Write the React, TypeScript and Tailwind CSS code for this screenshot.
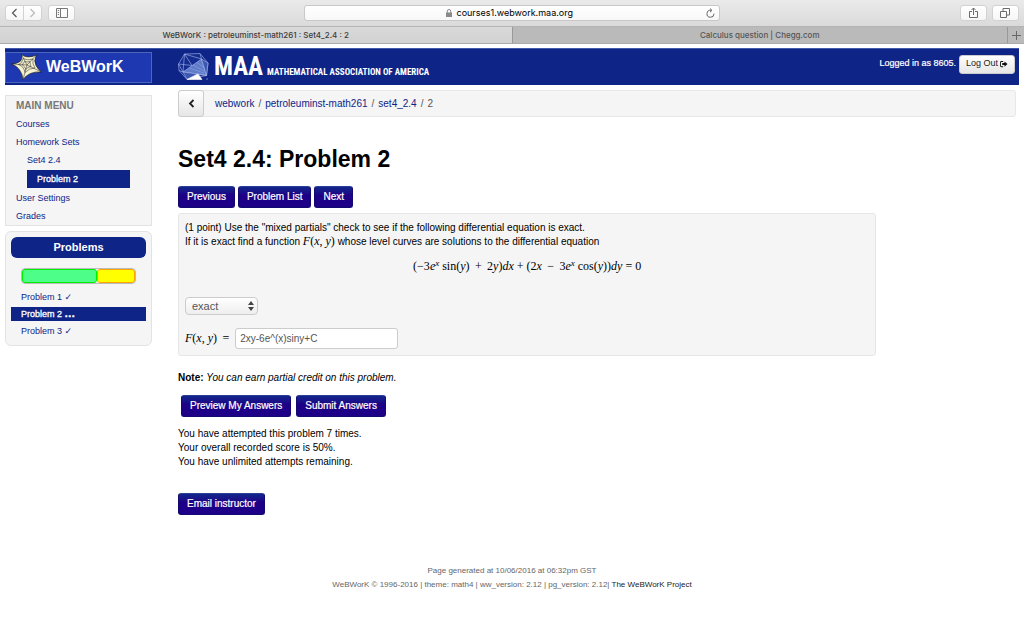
import type { ReactNode } from "react"
import { useState } from "react"

const primaryButton =
  "h-[22px] rounded-[3px] border border-[#120a70] border-t-[#2b3f96] bg-gradient-to-b from-[#10258a] to-[#1d0087] to-40% px-2 text-[10px] leading-5 text-white [-webkit-text-stroke:0.2px_white]"

const toolbarButton =
  "flex h-4 items-center justify-center rounded-[3px] border border-[#d2d2d2] bg-gradient-to-b from-white to-[#f6f6f6] text-[#6b6b6b]"

const menuItems = [
  { label: "Courses", style: "px-[10px]" },
  { label: "Homework Sets", style: "px-[10px]" },
  { label: "Set4 2.4", style: "px-[21px]" },
  {
    label: "Problem 2",
    style: "my-px mx-[21px] bg-[#0f2487] pl-[10px] text-white [-webkit-text-stroke:0.3px_white]",
  },
  { label: "User Settings", style: "px-[10px]" },
  { label: "Grades", style: "px-[10px]" },
]

const problems = [
  { label: "Problem 1", mark: "✓", active: false },
  { label: "Problem 2", mark: "...", active: true },
  { label: "Problem 3", mark: "✓", active: false },
]

function M({ children }: { children: ReactNode }) {
  return <span className="font-['Liberation_Serif',serif] text-[12px] leading-none">{children}</span>
}

function BrowserChrome() {
  return (
    <div>
      <div className="flex h-[27px] items-center justify-between border-b border-[#b4b4b4] bg-gradient-to-b from-[#eaeaea] to-[#dadada] px-[5px]">
        <div className="flex w-72 items-center">
          <button className={`${toolbarButton} w-[19px] rounded-r-none`} aria-label="Back">
            <svg width="7" height="10" viewBox="0 0 7 10" fill="none" stroke="#555" strokeWidth="1.2">
              <path d="M5.5 1L1.5 5l4 4" />
            </svg>
          </button>
          <button className={`${toolbarButton} -ml-px w-[19px] rounded-l-none`} aria-label="Forward">
            <svg width="7" height="10" viewBox="0 0 7 10" fill="none" stroke="#b9b9b9" strokeWidth="1.2">
              <path d="M1.5 1l4 4-4 4" />
            </svg>
          </button>
          <button className={`${toolbarButton} ml-1.5 w-[27px]`} aria-label="Sidebar">
            <svg width="12" height="10" viewBox="0 0 12 10" fill="none" stroke="#777" strokeWidth="1">
              <path d="M.5.5h11v9H.5zM4.500.5v9M1.800 2.500h1.300M1.800 4.500h1.300M1.800 6.500h1.300" />
            </svg>
          </button>
        </div>
        <div className="flex h-4 w-[41%] items-center rounded-[3px] border border-[#c8c8c8] bg-gradient-to-b from-white to-[#f8f8f8]">
          <div className="flex flex-1 items-center justify-center gap-1 pl-3">
            <svg width="6" height="8" viewBox="0 0 6 8" fill="#8a8a8a">
              <path d="M0 3.500h6V8H0z" />
              <path d="M1.300 4V2.200a1.700 1.700 0 013.400 0V4" fill="none" stroke="#8a8a8a" />
            </svg>
            <input
              aria-label="Address"
              defaultValue="courses1.webwork.maa.org"
              className="w-[120px] bg-transparent font-[Inter,sans-serif] text-[9px] text-black outline-none"
            />
          </div>
          <button className="mr-1 text-[#666]" aria-label="Reload">
            <svg width="9" height="10" viewBox="0 0 9 10" fill="none" stroke="currentColor" strokeWidth="1">
              <path d="M5 2.300A3.500 3.500 0 108 5.700M4 .500l2 1.900-2 1.800" />
            </svg>
          </button>
        </div>
        <div className="flex w-72 justify-end gap-[5px]">
          <button className={`${toolbarButton} w-[27px]`} aria-label="Share">
            <svg width="9" height="12" viewBox="0 0 9 12" fill="none" stroke="currentColor" strokeWidth="1">
              <path d="M3 4.500H.500v6h8v-6H6M4.500 8V1M2.500 3l2-2 2 2" />
            </svg>
          </button>
          <button className={`${toolbarButton} w-[27px]`} aria-label="Show tabs">
            <svg width="10" height="10" viewBox="0 0 10 10" fill="none" stroke="currentColor" strokeWidth="1">
              <path d="M.5 3.500h6v6h-6zM3 3V.500h6.500V7H7" />
            </svg>
          </button>
        </div>
      </div>

      {/* Tabs */}
      <div className="flex h-[17px] border-b border-[#aaa] font-[Inter,sans-serif] text-[8px] font-medium leading-4">
        <button className="flex-1 bg-gradient-to-b from-[#d9d9d9] to-[#d2d2d2] text-[#3d3d3d]">
          WeBWorK : petroleuminst-math261 : Set4_2.4 : 2
        </button>
        <div className="flex flex-1 border-l border-[#999] bg-[#bababa] text-[#555]">
          <button className="flex-1">Calculus question | Chegg.com</button>
          <button className="flex w-[17px] items-center justify-center border-l border-[#999]" aria-label="New tab">
            <svg width="9" height="9" viewBox="0 0 9 9" stroke="#666" strokeWidth="1">
              <path d="M4.500 0v9M0 4.500h9" />
            </svg>
          </button>
        </div>
      </div>
    </div>
  )
}

function WebworkLogo() {
  return (
    <svg width="31" height="26" viewBox="0 0 31 26" fill="#f3efcf" stroke="#20201c" strokeWidth=".7">
      <path d="M10.500.500Q16 5 25.500 1Q22.500 7 25 11.500Q27 15.500 30.500 18Q24 17.500 19.500 19.500Q15 21.500 12 25.500Q11.500 20 8.500 16Q6 12 .500 10Q7 9.500 9.500 7Q11.500 4.500 10.500.500Z" />
      <g fill="none" strokeWidth=".5">
        <path d="M10.500.500L16 11 25.500 1M.500 10L16 11l14.500 7M16 11l-4 14.500" />
        <path d="M12 4.500q5 2.500 10 .500q-1 5 2 9q-6 0-10 4.500q-1-6-6.500-8q4-1 4.500-6z" />
        <path d="M13.500 7.500q3 1 5.500 0q0 3 1 5q-4 .500-5 3q-1-3-4-5q2-1 2.500-3z" />
      </g>
    </svg>
  )
}

function MaaLogo() {
  return (
    <svg width="31" height="28" viewBox="0 0 31 28" fill="none" stroke="#a9bbed" strokeWidth=".6">
      <path d="M6.500 1L22 .500 30 10l-1.500 12.500L9 26.500 1 17.500.500 11z" fill="#152d90" />
      <path d="M23.500 6L5 19l23.500 3.500z" fill="#5f7bc9" />
      <path d="M23.500 6L30 10l-1.500 12.500z" fill="#3c57b0" />
      <path d="M5 19l15 2-11 5.500z" fill="#3c57b0" />
      <path d="M9 26.500L20 21l4 5.500z" fill="#fff" stroke="#fff" />
      <path d="M6.500 1l17 5L22 .500M6.500 1L5 19M.500 11L5 19l-4-1.500M.500 11L14 12.500M6.500 1L14 12.500M20 21l8.500 1.500" />
      <path d="M11 15l15 5M15 12l11 6M19 9.500l8 6" strokeWidth=".4" />
      <circle cx="29" cy="26" r=".7" fill="#8fa4e4" stroke="none" />
    </svg>
  )
}

function Header() {
  return (
    <header className="flex h-[37px] items-center border-t border-[#4059aa] bg-[#0f2487] pr-1">
      <a
        href="#webwork"
        className="flex h-[31px] w-[147px] items-center gap-1 border border-[#4c66bd] bg-[#1e38b2] pl-[5px] text-[16px] font-bold text-white"
      >
        <WebworkLogo />
        WeBWorK
      </a>
      <a href="#maa" className="ml-[26px] flex items-center gap-[5px] text-white">
        <MaaLogo />
        <span className="flex items-baseline gap-1 font-['Roboto_Condensed','Liberation_Sans_Narrow','Liberation_Sans',sans-serif] font-bold">
          <span className="text-[25px] leading-7">MAA</span>
          <span className="text-[9px]">MATHEMATICAL ASSOCIATION OF AMERICA</span>
        </span>
      </a>
      <div className="ml-auto flex items-center gap-[3px] pb-1.5">
        <span className="text-[9px] text-white [-webkit-text-stroke:0.2px_white]">Logged in as 8605.</span>
        <button className="flex h-[19px] items-center gap-0.5 rounded-[3px] border border-[#ccc] bg-gradient-to-b from-white to-[#e6e6e6] px-1.5 text-[9px] text-[#222]">
          Log Out
          <svg width="8" height="7" viewBox="0 0 9 8" fill="#111">
            <path d="M3.500 0H1.500Q0 0 0 1.500v4Q0 7 1.500 7h2V6h-2Q1 6 1 5.500v-4Q1 1 1.500 1h2z" />
            <path d="M2.500 2.300H5V.500l3.500 3L5 6.500V4.700H2.500z" />
          </svg>
        </button>
      </div>
    </header>
  )
}

function Sidebar() {
  return (
    <aside className="w-[147px] shrink-0 pt-[10px] text-[9px]">
      <nav className="border border-[#e3e3e3] bg-[#f5f5f5]">
        <h2 className="px-[10px] pt-px text-[10px] font-bold leading-[18px] text-[#777]">MAIN MENU</h2>
        <ul>
          {menuItems.map((item) => (
            <li key={item.label} className={`leading-[18px] text-[#0f2487] ${item.style}`}>
              <a href="#menu">{item.label}</a>
            </li>
          ))}
        </ul>
      </nav>

      <section className="mt-[5px] rounded-md border border-[#e3e3e3] bg-[#f5f5f5] px-[5px] pb-1 pt-[5px]">
        <h2 className="rounded-md bg-[#0f2487] text-center text-[11px] font-bold leading-[21px] text-white">Problems</h2>
        <div className="mx-[10px] mb-[6px] mt-[10px] flex h-4 rounded border border-[#bbb]">
          <div className="w-2/3 rounded-[3px] border border-[#00f000] bg-[#4dff88]" />
          <div className="w-1/3 rounded-[3px] border border-[#ffa500] bg-[#ffff00]" />
        </div>
        <ul>
          {problems.map((p) => (
            <li
              key={p.label}
              className={`my-[3px] pl-[10px] leading-[14px] ${p.active ? "bg-[#0f2487] text-white [-webkit-text-stroke:0.3px_white]" : "text-[#0f2487]"}`}
            >
              <a href="#problem">
                {p.label} <span className="font-['DejaVu_Sans',sans-serif] font-bold">{p.mark}</span>
              </a>
            </li>
          ))}
        </ul>
      </section>
    </aside>
  )
}

function Breadcrumb() {
  return (
    <nav className="mt-[5px] flex h-[27px] items-center rounded-[3px] border border-[#e8e8e8] bg-[#f5f5f5] text-[10px] text-[#0f2487]">
      <button
        aria-label="Up"
        className="-ml-px flex h-[27px] w-[26px] items-center justify-center rounded-[3px] border border-[#ccc] bg-gradient-to-b from-white to-[#e6e6e6]"
      >
        <svg width="7" height="9" viewBox="0 0 7 9" fill="none" stroke="#222" strokeWidth="1.8">
          <path d="M5.500 1L2 4.500 5.500 8" />
        </svg>
      </button>
      <div className="ml-[11px] flex gap-1">
        <a href="#webwork">webwork</a>
        <span className="text-[#555]">/</span>
        <a href="#course">petroleuminst-math261</a>
        <span className="text-[#555]">/</span>
        <a href="#set">set4_2.4</a>
        <span className="text-[#555]">/</span>
        <span className="text-[#555]">2</span>
      </div>
    </nav>
  )
}

function ProblemBody() {
  const [kind, setKind] = useState("exact")
  const [answer, setAnswer] = useState("2xy-6e^(x)siny+C")

  return (
    <div className="mt-[5px] w-5/6 rounded-[3px] border border-[#e6e6e6] bg-[#f5f5f5] px-1.5 pb-1.5 pt-[7px]">
      <p className="leading-[14px]">
        (1 point) Use the "mixed partials" check to see if the following differential equation is exact.
        <br />
        If it is exact find a function{" "}
        <M>
          <i>F</i>(<i>x</i>, <i>y</i>)
        </M>{" "}
        whose level curves are solutions to the differential equation
      </p>
      <p className="mt-[10px] text-center leading-4">
        <M>
          (−3<i>e</i>
          <sup className="text-[9px]">
            <i>x</i>
          </sup>{" "}
          sin(<i>y</i>)&thinsp; + &thinsp;2<i>y</i>)<i>dx</i> + (2<i>x</i>&thinsp; − &thinsp;3<i>e</i>
          <sup className="text-[9px]">
            <i>x</i>
          </sup>{" "}
          cos(<i>y</i>))<i>dy</i> = 0
        </M>
      </p>
      <div className="relative mt-[22px] w-[73px]">
        <select
          aria-label="Exactness"
          value={kind}
          onChange={(e) => setKind(e.target.value)}
          className="block h-[18px] w-full appearance-none rounded-[4px] border border-[#ccc] bg-gradient-to-b from-white to-[#eee] pl-[6px] text-[11px] leading-4 text-[#555]"
        >
          <option value="exact">exact</option>
          <option value="not exact">not exact</option>
        </select>
        <svg className="pointer-events-none absolute right-1 top-1" width="6" height="10" viewBox="0 0 6 10" fill="#444">
          <path d="M3 0l3 4H0zM3 10L0 6h6z" />
        </svg>
      </div>
      <div className="mt-[13px] flex items-center gap-1.5">
        <label htmlFor="answer">
          <M>
            <i>F</i>(<i>x</i>, <i>y</i>)&thinsp; =
          </M>
        </label>
        <input
          id="answer"
          value={answer}
          onChange={(e) => setAnswer(e.target.value)}
          className="h-[21px] w-[163px] rounded-[3px] border border-[#ccc] bg-white px-1 text-[10px] text-[#555]"
        />
      </div>
    </div>
  )
}

export default function App() {
  return (
    <div className="min-h-screen bg-white font-['Liberation_Sans',Arial,sans-serif] text-[10px] text-black">
      <BrowserChrome />
      <div className="px-[5px] pt-1">
        <Header />
        <div className="flex gap-[26px]">
          <Sidebar />
          <main className="flex-1 pr-[3px]">
            <Breadcrumb />
            <h1 className="mt-[28px] text-[23px] font-bold leading-7">Set4 2.4: Problem 2</h1>
            <div className="mt-[13px] flex gap-[3px]">
              <button className={primaryButton}>Previous</button>
              <button className={primaryButton}>Problem List</button>
              <button className={primaryButton}>Next</button>
            </div>

            <ProblemBody />

            <p className="mt-[15px] leading-[14px]">
              <b>Note:</b> <i>You can earn partial credit on this problem.</i>
            </p>
            <div className="mt-[10px] flex gap-[5px] pl-[3px]">
              <button className={primaryButton}>Preview My Answers</button>
              <button className={primaryButton}>Submit Answers</button>
            </div>
            <p className="mt-[10px] leading-[14px]">
              You have attempted this problem 7 times.
              <br />
              Your overall recorded score is 50%.
              <br />
              You have unlimited attempts remaining.
            </p>
            <button className={`${primaryButton} mt-6`}>Email instructor</button>
          </main>
        </div>

        <footer className="mt-[49px] text-center text-[8px] leading-[14px] text-[#666]">
          <p>Page generated at 10/06/2016 at 06:32pm GST</p>
          <p>
            WeBWorK © 1996-2016 | theme: math4 | ww_version: 2.12 | pg_version: 2.12|{" "}
            <a href="#project" className="text-[#222]">
              The WeBWorK Project
            </a>
          </p>
        </footer>
      </div>
    </div>
  )
}
